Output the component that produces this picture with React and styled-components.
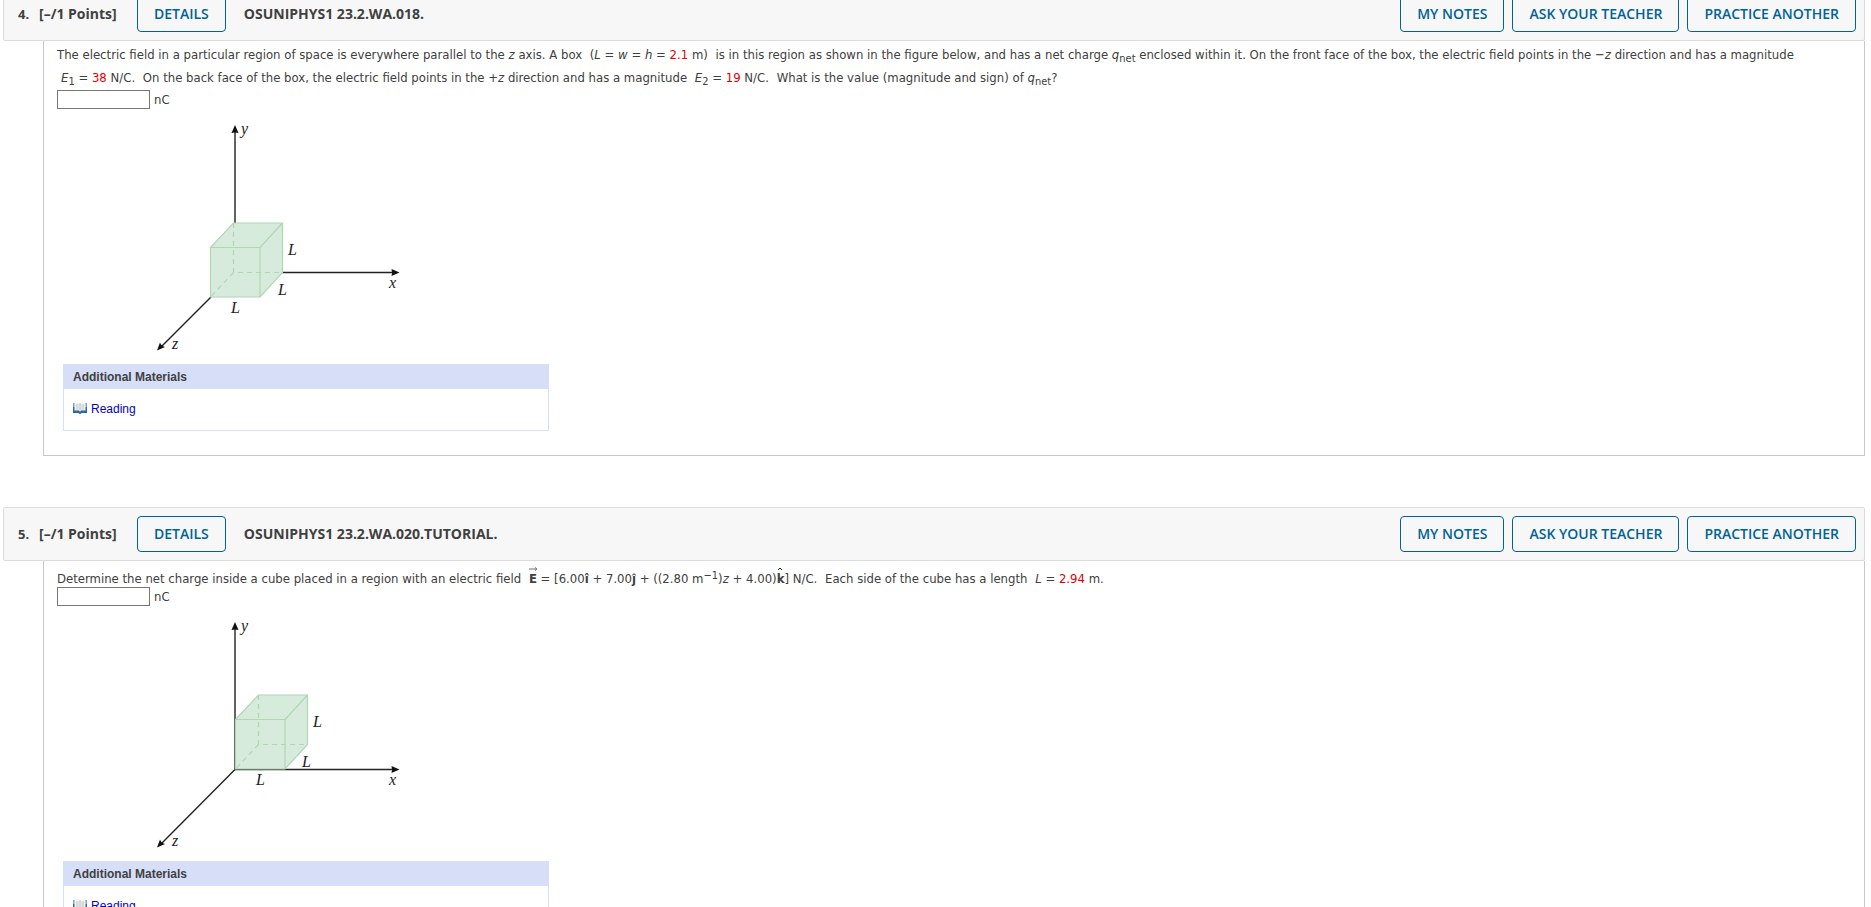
import React from 'react';
import styled, { createGlobalStyle } from 'styled-components';

const GlobalStyle = createGlobalStyle`
  body {
    margin: 0;
    background: #fff;
    color: #404040;
    font-family: 'DejaVu Sans Condensed', Tahoma, sans-serif;
    font-size: 13px;
    overflow: hidden;
  }
  * { box-sizing: border-box; }
`;

const Page = styled.main`
  height: 100vh;
  overflow: hidden;
  padding: 0 6px 0 3px;
`;

const Question = styled.section`
  margin-bottom: 51px;

  &:first-child {
    margin-top: -13px;
  }
`;

const Header = styled.header`
  display: flex;
  align-items: center;
  height: 54px;
  padding: 0 8px 1px 14px;
  background: #f7f7f7;
  border: 1px solid #dcdcdc;
  border-radius: 2px;
  font-family: 'Open Sans', sans-serif;
  font-size: 14px;
  font-weight: 700;
`;

const Number = styled.span`
  width: 21px;
  font-family: 'Noto Sans', sans-serif;
  font-size: 13px;
`;

const Points = styled.span`
  width: 98px;
`;

const Code = styled.h2`
  flex: 1;
  margin: 0 0 0 18px;
  font-size: 14px;
`;

const Actions = styled.div`
  display: flex;
  gap: 8px;
`;

const Button = styled.button`
  height: 36px;
  padding: 0 16px;
  background: transparent;
  border: 1px solid #006298;
  border-radius: 4px;
  color: #006298;
  font-family: inherit;
  font-size: 14px;
  font-weight: 600;
`;

const Body = styled.div`
  margin-left: 40px;
  padding: ${(p) => p.$top} 13px 24px;
  border: 1px solid #c8c8c8;
  border-top: 0;
`;

const Prompt = styled.p`
  margin: 0 0 1px;
  line-height: ${(p) => p.$leading};
`;

const Value = styled.span`
  color: #e00000;
`;

const Term = styled.span`
  margin: 0 4px;
  white-space: nowrap;
`;

const Sub = styled.sub`
  font-size: 11px;
  line-height: 0;
  vertical-align: -3px;
`;

const Sup = styled.sup`
  font-size: 11px;
  line-height: 0;
  vertical-align: 4px;
`;

const Accented = styled.b`
  position: relative;
`;

const Accent = styled.svg`
  position: absolute;
  left: 0;
  bottom: 100%;
`;

const AnswerRow = styled.label`
  display: flex;
  align-items: center;
  gap: 4px;
`;

const Answer = styled.input`
  width: 93px;
  height: 19px;
  padding: 1px 2px;
  border: 1px solid #767676;
  font: inherit;
`;

const Figure = styled.svg`
  display: block;
  margin-top: 9px;
  font-family: 'Liberation Serif', serif;
  font-style: italic;
  font-size: 16px;
  fill: #222;
`;

const Materials = styled.aside`
  width: 486px;
  max-width: 100%;
  margin: 8px 6px 0;
  border: 1px solid #d6def8;
  font-family: 'Liberation Sans', Arial, sans-serif;
  font-size: 12px;
`;

const MaterialsTitle = styled.h3`
  margin: 0;
  padding: 0 9px;
  background: #d6def8;
  font-size: 12px;
  line-height: 24px;
`;

const MaterialsLink = styled.a`
  display: flex;
  align-items: center;
  gap: 4px;
  height: 41px;
  padding: 0 9px 2px;
  color: #0000cc;
  text-decoration: none;
`;

function BookIcon() {
  return (
    <svg width="14" height="14" viewBox="0 0 14 14" aria-hidden="true">
      <path d="M0 1h14v10H9l-2 1-2-1H0z" fill="#2f659b" />
      <path d="M0 1h14v4H0z" fill="#7fa6c8" />
      <path d="M1.500 .5H6l1 1 1-1h4.500v8H8L7 9.500 6 8.500H1.500z" fill="#f6f5f0" />
      <path d="M7 1.500v8M3 3h2.500M3 5h2.500M3 7h2.500M8.500 3H11M8.500 5H11M8.500 7H11" stroke="#b5bcc2" fill="none" />
    </svg>
  );
}

function Arrow({ d, head }) {
  return (
    <g>
      <path d={d} stroke="#222" strokeWidth="1.400" fill="none" />
      <path d={head} fill="#111" />
    </g>
  );
}

function CubeFigure({ cubeX, cubeY, corner, labels }) {
  return (
    <Figure width="360" height="238" viewBox="57 118 360 238" role="img" aria-label="Cube of side L with x, y and z axes">
      <Arrow d={`M235 ${corner.yEnd}V130`} head="M235 125l3.500 8q-3.500-1-7 0z" />
      <Arrow d={`M${corner.xStart} 272.500H394`} head="M399.500 272.500l-8 3.500q1-3.500 0-7z" />
      <Arrow d={`M${corner.zStart}L161 347`} head="M157 350.500l3-8q1 3 5 4.500z" />
      <g transform={`translate(${cubeX} ${cubeY})`} fill="none" stroke="#b0d6b4" strokeWidth="1.200">
        <path d="M0 24.500L23 0H72V49.500L49.500 74H0z" fill="#cfe8d6" fillOpacity=".85" />
        <path d="M0 24.500H49.500V74M49.500 24.500L72 0" />
        <path d="M23 0V49.500H72M23 49.500L0 74" strokeDasharray="5 4" />
      </g>
      <text x="241" y="134">y</text>
      <text x="389" y="288">x</text>
      <text x="172" y="349">z</text>
      {labels.map(([x, y]) => (
        <text key={x} x={x} y={y}>L</text>
      ))}
    </Figure>
  );
}

function QuestionCard({ number, code, top, leading, prompt, figure }) {
  return (
    <Question>
      <Header>
        <Number>{number}.</Number>
        <Points>[–/1 Points]</Points>
        <Button type="button">DETAILS</Button>
        <Code>{code}</Code>
        <Actions>
          <Button type="button">MY NOTES</Button>
          <Button type="button">ASK YOUR TEACHER</Button>
          <Button type="button">PRACTICE ANOTHER</Button>
        </Actions>
      </Header>
      <Body $top={top}>
        <Prompt $leading={leading}>{prompt}</Prompt>
        <AnswerRow>
          <Answer type="text" />
          nC
        </AnswerRow>
        <CubeFigure {...figure} />
        <Materials>
          <MaterialsTitle>Additional Materials</MaterialsTitle>
          <MaterialsLink href="#reading">
            <BookIcon />
            Reading
          </MaterialsLink>
        </Materials>
      </Body>
    </Question>
  );
}

export default function App() {
  return (
    <>
      <GlobalStyle />
      <Page>
        <QuestionCard
          number={4}
          code="OSUNIPHYS1 23.2.WA.018."
          top="2px"
          leading="23px"
          prompt={
            <>
              The electric field in a particular region of space is everywhere parallel to the <i>z</i> axis. A box{' '}
              <Term>(<i>L</i> = <i>w</i> = <i>h</i> = <Value>2.1</Value> m)</Term>{' '}
              is in this region as shown in the figure below, and has a net charge <i>q</i><Sub>net</Sub> enclosed
              within it. On the front face of the box, the electric field points in the −<i>z</i> direction and has a magnitude{' '}
              <Term><i>E</i><Sub>1</Sub> = <Value>38</Value> N/C.</Term>{' '}
              On the back face of the box, the electric field points in the +<i>z</i> direction and has a magnitude{' '}
              <Term><i>E</i><Sub>2</Sub> = <Value>19</Value> N/C.</Term>{' '}
              What is the value (magnitude and sign) of <i>q</i><Sub>net</Sub>?
            </>
          }
          figure={{
            cubeX: 210.5,
            cubeY: 223,
            corner: { yEnd: 223, xStart: 282, zStart: '211 297' },
            labels: [[288, 255], [278, 295], [231, 313]],
          }}
        />
        <QuestionCard
          number={5}
          code="OSUNIPHYS1 23.2.WA.020.TUTORIAL."
          top="10px"
          leading="15px"
          prompt={
            <>
              Determine the net charge inside a cube placed in a region with an electric field{' '}
              <Term>
                <Accented>E<Accent width="9" height="4" viewBox="0 0 9 4"><path d="M0 2h7M6 .5l2 1.500-2 1.500" stroke="#707070" fill="none" /></Accent></Accented>
                {' '}= [6.00<b>î</b> + 7.00<b>ĵ</b> + ((2.80 m<Sup>−1</Sup>)<i>z</i> + 4.00)
                <Accented>k<Accent width="6" height="4" viewBox="0 0 6 4"><path d="M1 3l2-2 2 2" stroke="#222" fill="none" /></Accent></Accented>
                ] N/C.
              </Term>{' '}
              Each side of the cube has a length <Term><i>L</i> = <Value>2.94</Value> m.</Term>
            </>
          }
          figure={{
            cubeX: 235.5,
            cubeY: 198,
            corner: { yEnd: 272.5, xStart: 235, zStart: '235 272.5' },
            labels: [[313, 230], [302, 270], [256, 288]],
          }}
        />
      </Page>
    </>
  );
}
